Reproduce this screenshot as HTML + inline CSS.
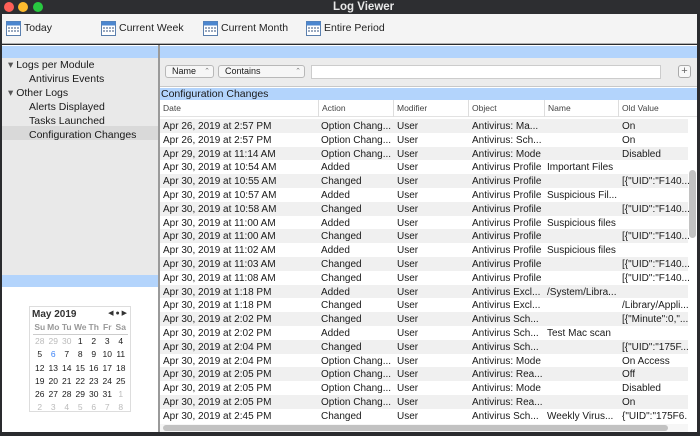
<!DOCTYPE html>
<html><head><meta charset="utf-8"><style>
*{margin:0;padding:0;box-sizing:border-box}
body{width:700px;height:436px;overflow:hidden;background:#2a2b2e;font-family:"Liberation Sans",sans-serif;font-size:10px;color:#1a1a1a;position:relative}
.abs{position:absolute}
#title{left:0;top:0;width:700px;height:14px;background:#2d2e31;color:#e8e8e8;font-weight:bold;font-size:11.5px;line-height:14px}
.dot{position:absolute;top:2px;width:10px;height:10px;border-radius:50%}
#tb{left:2px;top:14px;width:695px;height:30px;background:#f4f4f4;border-bottom:1px solid #b0b0b0}
.tbi{position:absolute;top:7px;height:15px;line-height:15px;font-size:10.5px;color:#222}
.tbi svg{position:absolute;left:0;top:0}
.tbi span{position:absolute;left:18px;white-space:nowrap}
#side{left:2px;top:45px;width:156px;height:387px;background:#fff}
#main{left:160px;top:45px;width:537px;height:387px;background:#fff}
.blue{background:#b3d4fc}
.sb{position:absolute;left:0;font-size:10.5px;white-space:nowrap}
.row{position:absolute;left:0;width:528px;height:13.8px;line-height:15px;font-size:10px;white-space:nowrap}
.row span,.hdr span{position:absolute;overflow:hidden}
.g{background:#f0f0f0}
.hdr{position:absolute;left:0;top:55px;width:537px;height:17px;line-height:16px;font-size:8.5px;color:#444;background:#fff;border-bottom:1px solid #e2e2e2}
.hdr span{border-left:1px solid #ddd;padding-left:3px;height:17px}
.sel{position:absolute;top:20px;height:13px;border:1px solid #b8b8b8;border-radius:3px;background:#f6f6f6;font-size:9px;line-height:11px;padding-left:6px}
.cal{font-size:8.5px}
.cal td{width:13.5px;height:13.3px;text-align:center;padding:0}
</style></head><body>
<div id="title" class="abs"><span style="position:absolute;left:333px">Log Viewer</span>
<div class="dot" style="left:4px;background:#fd5f57"></div>
<div class="dot" style="left:18px;background:#fdbb2e"></div>
<div class="dot" style="left:33px;background:#28c840"></div>
</div>
<div id="tb" class="abs">
<div class="tbi" style="left:4px"><svg width="15" height="15"><rect x="0.5" y="0.5" width="14" height="14" fill="#fff" stroke="#5a7fae"/><rect x="0.5" y="0.5" width="14" height="4" fill="#4b86cf"/><g fill="#9aa9bf"><rect x="2" y="6" width="2" height="2"/><rect x="5" y="6" width="2" height="2"/><rect x="8" y="6" width="2" height="2"/><rect x="11" y="6" width="2" height="2"/><rect x="2" y="9" width="2" height="2"/><rect x="5" y="9" width="2" height="2"/><rect x="8" y="9" width="2" height="2"/><rect x="11" y="9" width="2" height="2"/></g></svg><span>Today</span></div>
<div class="tbi" style="left:99px"><svg width="15" height="15"><rect x="0.5" y="0.5" width="14" height="14" fill="#fff" stroke="#5a7fae"/><rect x="0.5" y="0.5" width="14" height="4" fill="#4b86cf"/><g fill="#9aa9bf"><rect x="2" y="6" width="2" height="2"/><rect x="5" y="6" width="2" height="2"/><rect x="8" y="6" width="2" height="2"/><rect x="11" y="6" width="2" height="2"/><rect x="2" y="9" width="2" height="2"/><rect x="5" y="9" width="2" height="2"/><rect x="8" y="9" width="2" height="2"/><rect x="11" y="9" width="2" height="2"/></g></svg><span>Current Week</span></div>
<div class="tbi" style="left:201px"><svg width="15" height="15"><rect x="0.5" y="0.5" width="14" height="14" fill="#fff" stroke="#5a7fae"/><rect x="0.5" y="0.5" width="14" height="4" fill="#4b86cf"/><g fill="#9aa9bf"><rect x="2" y="6" width="2" height="2"/><rect x="5" y="6" width="2" height="2"/><rect x="8" y="6" width="2" height="2"/><rect x="11" y="6" width="2" height="2"/><rect x="2" y="9" width="2" height="2"/><rect x="5" y="9" width="2" height="2"/><rect x="8" y="9" width="2" height="2"/><rect x="11" y="9" width="2" height="2"/></g></svg><span>Current Month</span></div>
<div class="tbi" style="left:304px"><svg width="15" height="15"><rect x="0.5" y="0.5" width="14" height="14" fill="#fff" stroke="#5a7fae"/><rect x="0.5" y="0.5" width="14" height="4" fill="#4b86cf"/><g fill="#9aa9bf"><rect x="2" y="6" width="2" height="2"/><rect x="5" y="6" width="2" height="2"/><rect x="8" y="6" width="2" height="2"/><rect x="11" y="6" width="2" height="2"/><rect x="2" y="9" width="2" height="2"/><rect x="5" y="9" width="2" height="2"/><rect x="8" y="9" width="2" height="2"/><rect x="11" y="9" width="2" height="2"/></g></svg><span>Entire Period</span></div>
</div>

<div id="side" class="abs">
<div class="abs blue" style="left:0;top:1px;width:156px;height:12px"></div>
<div class="abs" style="left:0;top:13px;width:156px;height:217px;background:#e9e9e9"></div>
<div class="abs" style="left:0;top:81px;width:156px;height:14px;background:#d9d9d9"></div>
<div class="sb" style="left:6px;top:14px;color:#555">▾<span style="color:#1a1a1a"> Logs per Module</span></div>
<div class="sb" style="left:27px;top:28px">Antivirus Events</div>
<div class="sb" style="left:6px;top:42px;color:#555">▾<span style="color:#1a1a1a"> Other Logs</span></div>
<div class="sb" style="left:27px;top:56px">Alerts Displayed</div>
<div class="sb" style="left:27px;top:70px">Tasks Launched</div>
<div class="sb" style="left:27px;top:84px">Configuration Changes</div>
<div class="abs blue" style="left:0;top:230px;width:156px;height:12px"></div>
<div class="abs" style="left:27px;top:261px;width:102px;height:106px;border:1px solid #ddd;background:#fff">
<div style="position:absolute;left:2px;top:2px;font-weight:bold;font-size:10px;color:#333">May 2019</div>
<div style="position:absolute;right:3px;top:2px;font-size:7px;color:#333">◀ ● ▶</div>
<table class="cal" style="position:absolute;left:3px;top:14px;border-collapse:collapse">
<tr style="color:#999;font-weight:bold;border-bottom:1px solid #ccc"><td>Su</td><td>Mo</td><td>Tu</td><td>We</td><td>Th</td><td>Fr</td><td>Sa</td></tr>
<tr><td style="color:#bbb">28</td><td style="color:#bbb">29</td><td style="color:#bbb">30</td><td>1</td><td>2</td><td>3</td><td>4</td></tr>
<tr><td>5</td><td style="color:#3b82f6">6</td><td>7</td><td>8</td><td>9</td><td>10</td><td>11</td></tr>
<tr><td>12</td><td>13</td><td>14</td><td>15</td><td>16</td><td>17</td><td>18</td></tr>
<tr><td>19</td><td>20</td><td>21</td><td>22</td><td>23</td><td>24</td><td>25</td></tr>
<tr><td>26</td><td>27</td><td>28</td><td>29</td><td>30</td><td>31</td><td style="color:#bbb">1</td></tr>
<tr style="color:#bbb"><td>2</td><td>3</td><td>4</td><td>5</td><td>6</td><td>7</td><td>8</td></tr>
</table></div>
</div>
<div class="abs" style="left:158px;top:45px;width:2px;height:387px;background:#9a9a9a"></div>

<div id="main" class="abs">
<div class="abs blue" style="left:0;top:1px;width:537px;height:12px"></div>
<div class="abs" style="left:0;top:13px;width:537px;height:29px;background:#ececec;border-bottom:1px solid #c8c8c8"></div>
<div class="sel" style="left:5px;width:49px">Name<span style="position:absolute;right:3px;top:0;font-size:7px;color:#777">⌃</span></div>
<div class="sel" style="left:58px;width:87px">Contains<span style="position:absolute;right:3px;top:0;font-size:7px;color:#777">⌃</span></div>
<div class="abs" style="left:151px;top:20px;width:350px;height:14px;background:#fff;border:1px solid #ccc"></div>
<div class="abs" style="left:518px;top:20px;width:13px;height:13px;border:1px solid #aaa;border-radius:3px;text-align:center;line-height:11px;font-size:11px;color:#666;background:#f8f8f8">+</div>
<div class="abs blue" style="left:0;top:43px;width:537px;height:12px;font-size:10.5px;line-height:12px;padding-left:1px">Configuration Changes</div>
<div class="hdr"><span style="left:0;border:none">Date</span><span style="left:158px">Action</span><span style="left:233px">Modifier</span><span style="left:308px">Object</span><span style="left:384px">Name</span><span style="left:458px">Old Value</span></div>
<div id="rows" class="abs" style="left:0;top:74px;width:528px;height:304px"></div>
<div class="abs" style="left:529px;top:125px;width:7px;height:68px;background:#c2c2c2;border-radius:4px"></div>
<div class="abs" style="left:0;top:379px;width:528px;height:8px;background:#f6f6f6"></div>
<div class="abs" style="left:3px;top:380px;width:505px;height:6px;background:#c2c2c2;border-radius:3px"></div>
</div>
<div class="abs" style="left:2px;top:432px;width:696px;height:4px;background:#2a2b2e"></div>
<script>
var d=[
["Apr 26, 2019 at 2:57 PM","Option Chang...","Antivirus: Ma...","","On"],
["Apr 26, 2019 at 2:57 PM","Option Chang...","Antivirus: Sch...","","On"],
["Apr 29, 2019 at 11:14 AM","Option Chang...","Antivirus: Mode","","Disabled"],
["Apr 30, 2019 at 10:54 AM","Added","Antivirus Profile","Important Files",""],
["Apr 30, 2019 at 10:55 AM","Changed","Antivirus Profile","","[{\"UID\":\"F140..."],
["Apr 30, 2019 at 10:57 AM","Added","Antivirus Profile","Suspicious Fil...",""],
["Apr 30, 2019 at 10:58 AM","Changed","Antivirus Profile","","[{\"UID\":\"F140..."],
["Apr 30, 2019 at 11:00 AM","Added","Antivirus Profile","Suspicious files",""],
["Apr 30, 2019 at 11:00 AM","Changed","Antivirus Profile","","[{\"UID\":\"F140..."],
["Apr 30, 2019 at 11:02 AM","Added","Antivirus Profile","Suspicious files",""],
["Apr 30, 2019 at 11:03 AM","Changed","Antivirus Profile","","[{\"UID\":\"F140..."],
["Apr 30, 2019 at 11:08 AM","Changed","Antivirus Profile","","[{\"UID\":\"F140..."],
["Apr 30, 2019 at 1:18 PM","Added","Antivirus Excl...","/System/Libra...",""],
["Apr 30, 2019 at 1:18 PM","Changed","Antivirus Excl...","","/Library/Appli..."],
["Apr 30, 2019 at 2:02 PM","Changed","Antivirus Sch...","","[{\"Minute\":0,\"..."],
["Apr 30, 2019 at 2:02 PM","Added","Antivirus Sch...","Test Mac scan",""],
["Apr 30, 2019 at 2:04 PM","Changed","Antivirus Sch...","","[{\"UID\":\"175F..."],
["Apr 30, 2019 at 2:04 PM","Option Chang...","Antivirus: Mode","","On Access"],
["Apr 30, 2019 at 2:05 PM","Option Chang...","Antivirus: Rea...","","Off"],
["Apr 30, 2019 at 2:05 PM","Option Chang...","Antivirus: Mode","","Disabled"],
["Apr 30, 2019 at 2:05 PM","Option Chang...","Antivirus: Rea...","","On"],
["Apr 30, 2019 at 2:45 PM","Changed","Antivirus Sch...","Weekly Virus...","{\"UID\":\"175F6."]];
var h="";function e(s){return s.replace(/&/g,"&amp;").replace(/</g,"&lt;")}
d.forEach(function(r,i){h+='<div class="row'+(i%2==0?' g':'')+'" style="top:'+(i*13.8)+'px"><span style="left:3px">'+e(r[0])+'</span><span style="left:161px">'+e(r[1])+'</span><span style="left:237px">User</span><span style="left:312px">'+e(r[2])+'</span><span style="left:387px">'+e(r[3])+'</span><span style="left:462px">'+e(r[4])+'</span></div>'});
document.getElementById("rows").innerHTML=h;
</script>
</body></html>
